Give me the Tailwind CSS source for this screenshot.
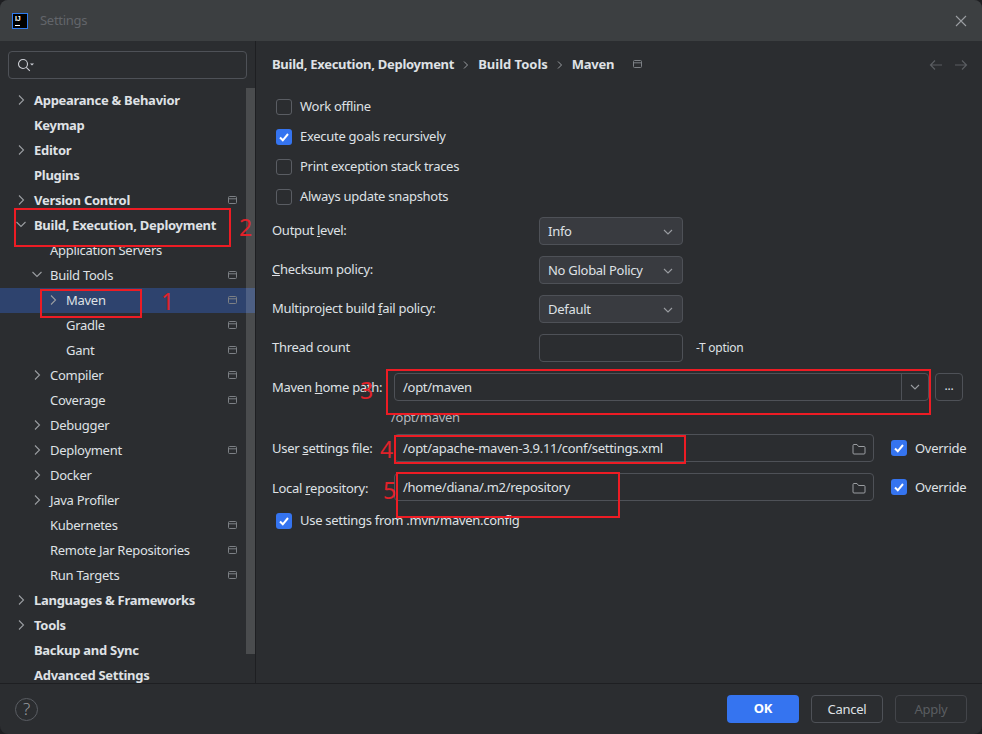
<!DOCTYPE html>
<html lang="en">
<head>
  <meta charset="UTF-8" />
  <title>Settings</title>
  <script src="https://cdn.jsdelivr.net/npm/@tailwindcss/browser@4"></script>
</head>
<body class="bg-[#1e1f22] font-['Noto_Sans',sans-serif] text-[13px] tracking-[-0.28px] text-[#dfe1e5]">
<div class="relative w-[982px] h-[734px] overflow-hidden rounded-[8px] bg-[#2b2d30] flex flex-col">

  <!-- Title bar -->
  <div class="h-[41px] shrink-0 bg-[#3c3f41] flex items-center pl-[12px] pr-[15px]">
    <div class="w-[16px] h-[16px] bg-black border border-[#2f7bf0] flex flex-col justify-between px-[2px] py-[1px]">
      <span class="text-white text-[7px] leading-[8px] font-bold font-['Liberation_Sans',sans-serif]">IJ</span>
      <span class="block w-[5px] h-[1px] bg-white mb-[1px]"></span>
    </div>
    <span class="ml-[12px] text-[#62656a]">Settings</span>
    <svg class="ml-auto" width="12" height="12" viewBox="0 0 12 12" fill="none" stroke="#9a9da1" stroke-width="1.1"><path d="M1 1l10 10M11 1L1 11"/></svg>
  </div>

  <div class="flex-1 flex min-h-0">
    <!-- Sidebar -->
    <div class="w-[256px] shrink-0 border-r border-[#1e1f22] relative">
      <div class="mt-[10px] mx-[8px] w-[239px] h-[28px] rounded-[4px] border border-[#4e5157] flex items-center pl-[8px]">
        <svg width="18" height="14" viewBox="0 0 18 14" fill="none" stroke="#ced0d6" stroke-width="1.1"><circle cx="6" cy="6" r="4.5"/><path d="M9.3 9.3l3.5 3.5"/><path d="M13 5.5h4l-2 2z" fill="#ced0d6" stroke="none"/></svg>
      </div>

      <div class="mt-[9px] text-[#dfe1e5]">
        <div class="h-[25px] flex items-center pl-[34px] font-bold relative"><svg class="absolute left-[17px] top-[6px]" width="8" height="12" viewBox="0 0 8 12" fill="none" stroke="#9a9da1" stroke-width="1.1"><path d="M2 1.5L6.5 6 2 10.5"/></svg>Appearance &amp; Behavior</div>
        <div class="h-[25px] flex items-center pl-[34px] font-bold">Keymap</div>
        <div class="h-[25px] flex items-center pl-[34px] font-bold relative"><svg class="absolute left-[17px] top-[6px]" width="8" height="12" viewBox="0 0 8 12" fill="none" stroke="#9a9da1" stroke-width="1.1"><path d="M2 1.5L6.5 6 2 10.5"/></svg>Editor</div>
        <div class="h-[25px] flex items-center pl-[34px] font-bold">Plugins</div>
        <div class="h-[25px] flex items-center pl-[34px] pr-[17px] font-bold relative"><svg class="absolute left-[17px] top-[6px]" width="8" height="12" viewBox="0 0 8 12" fill="none" stroke="#9a9da1" stroke-width="1.1"><path d="M2 1.5L6.5 6 2 10.5"/></svg>Version Control<svg class="ml-auto" width="10" height="10" viewBox="0 0 10 10" fill="none" stroke="#7d8085"><rect x=".5" y=".5" width="8" height="7" rx="1"/><path d="M.5 2.8h8"/></svg></div>
        <div class="h-[25px] flex items-center pl-[34px] font-bold relative"><svg class="absolute left-[15px] top-[7px]" width="12" height="8" viewBox="0 0 12 8" fill="none" stroke="#9a9da1" stroke-width="1.1"><path d="M1.5 2L6 6.5 10.5 2"/></svg>Build, Execution, Deployment</div>

        <div class="h-[25px] flex items-center pl-[50px]">Application Servers</div>
        <div class="h-[25px] flex items-center pl-[50px] pr-[17px] relative"><svg class="absolute left-[31px] top-[7px]" width="12" height="8" viewBox="0 0 12 8" fill="none" stroke="#9a9da1" stroke-width="1.1"><path d="M1.5 2L6 6.5 10.5 2"/></svg>Build Tools<svg class="ml-auto" width="10" height="10" viewBox="0 0 10 10" fill="none" stroke="#7d8085"><rect x=".5" y=".5" width="8" height="7" rx="1"/><path d="M.5 2.8h8"/></svg></div>
        <div class="h-[25px] flex items-center pl-[66px] pr-[17px] relative bg-[#2e436e]"><svg class="absolute left-[49px] top-[6px]" width="8" height="12" viewBox="0 0 8 12" fill="none" stroke="#9a9da1" stroke-width="1.1"><path d="M2 1.5L6.5 6 2 10.5"/></svg>Maven<svg class="ml-auto" width="10" height="10" viewBox="0 0 10 10" fill="none" stroke="#7d8085"><rect x=".5" y=".5" width="8" height="7" rx="1"/><path d="M.5 2.8h8"/></svg></div>
        <div class="h-[25px] flex items-center pl-[66px] pr-[17px]">Gradle<svg class="ml-auto" width="10" height="10" viewBox="0 0 10 10" fill="none" stroke="#7d8085"><rect x=".5" y=".5" width="8" height="7" rx="1"/><path d="M.5 2.8h8"/></svg></div>
        <div class="h-[25px] flex items-center pl-[66px] pr-[17px]">Gant<svg class="ml-auto" width="10" height="10" viewBox="0 0 10 10" fill="none" stroke="#7d8085"><rect x=".5" y=".5" width="8" height="7" rx="1"/><path d="M.5 2.8h8"/></svg></div>
        <div class="h-[25px] flex items-center pl-[50px] pr-[17px] relative"><svg class="absolute left-[33px] top-[6px]" width="8" height="12" viewBox="0 0 8 12" fill="none" stroke="#9a9da1" stroke-width="1.1"><path d="M2 1.5L6.5 6 2 10.5"/></svg>Compiler<svg class="ml-auto" width="10" height="10" viewBox="0 0 10 10" fill="none" stroke="#7d8085"><rect x=".5" y=".5" width="8" height="7" rx="1"/><path d="M.5 2.8h8"/></svg></div>
        <div class="h-[25px] flex items-center pl-[50px] pr-[17px]">Coverage<svg class="ml-auto" width="10" height="10" viewBox="0 0 10 10" fill="none" stroke="#7d8085"><rect x=".5" y=".5" width="8" height="7" rx="1"/><path d="M.5 2.8h8"/></svg></div>
        <div class="h-[25px] flex items-center pl-[50px] relative"><svg class="absolute left-[33px] top-[6px]" width="8" height="12" viewBox="0 0 8 12" fill="none" stroke="#9a9da1" stroke-width="1.1"><path d="M2 1.5L6.5 6 2 10.5"/></svg>Debugger</div>
        <div class="h-[25px] flex items-center pl-[50px] pr-[17px] relative"><svg class="absolute left-[33px] top-[6px]" width="8" height="12" viewBox="0 0 8 12" fill="none" stroke="#9a9da1" stroke-width="1.1"><path d="M2 1.5L6.5 6 2 10.5"/></svg>Deployment<svg class="ml-auto" width="10" height="10" viewBox="0 0 10 10" fill="none" stroke="#7d8085"><rect x=".5" y=".5" width="8" height="7" rx="1"/><path d="M.5 2.8h8"/></svg></div>
        <div class="h-[25px] flex items-center pl-[50px] relative"><svg class="absolute left-[33px] top-[6px]" width="8" height="12" viewBox="0 0 8 12" fill="none" stroke="#9a9da1" stroke-width="1.1"><path d="M2 1.5L6.5 6 2 10.5"/></svg>Docker</div>
        <div class="h-[25px] flex items-center pl-[50px] relative"><svg class="absolute left-[33px] top-[6px]" width="8" height="12" viewBox="0 0 8 12" fill="none" stroke="#9a9da1" stroke-width="1.1"><path d="M2 1.5L6.5 6 2 10.5"/></svg>Java Profiler</div>
        <div class="h-[25px] flex items-center pl-[50px] pr-[17px]">Kubernetes<svg class="ml-auto" width="10" height="10" viewBox="0 0 10 10" fill="none" stroke="#7d8085"><rect x=".5" y=".5" width="8" height="7" rx="1"/><path d="M.5 2.8h8"/></svg></div>
        <div class="h-[25px] flex items-center pl-[50px] pr-[17px]">Remote Jar Repositories<svg class="ml-auto" width="10" height="10" viewBox="0 0 10 10" fill="none" stroke="#7d8085"><rect x=".5" y=".5" width="8" height="7" rx="1"/><path d="M.5 2.8h8"/></svg></div>
        <div class="h-[25px] flex items-center pl-[50px] pr-[17px]">Run Targets<svg class="ml-auto" width="10" height="10" viewBox="0 0 10 10" fill="none" stroke="#7d8085"><rect x=".5" y=".5" width="8" height="7" rx="1"/><path d="M.5 2.8h8"/></svg></div>
        <div class="h-[25px] flex items-center pl-[34px] font-bold relative"><svg class="absolute left-[17px] top-[6px]" width="8" height="12" viewBox="0 0 8 12" fill="none" stroke="#9a9da1" stroke-width="1.1"><path d="M2 1.5L6.5 6 2 10.5"/></svg>Languages &amp; Frameworks</div>
        <div class="h-[25px] flex items-center pl-[34px] font-bold relative"><svg class="absolute left-[17px] top-[6px]" width="8" height="12" viewBox="0 0 8 12" fill="none" stroke="#9a9da1" stroke-width="1.1"><path d="M2 1.5L6.5 6 2 10.5"/></svg>Tools</div>
        <div class="h-[25px] flex items-center pl-[34px] font-bold">Backup and Sync</div>
        <div class="h-[25px] flex items-center pl-[34px] font-bold">Advanced Settings</div>
      </div>

      <!-- scrollbar thumb lies over the list -->
      <div class="absolute left-[246px] top-[47px] w-[9px] h-[566px] bg-white/15"></div>
    </div>

    <!-- Main panel -->
    <div class="flex-1 pl-[16px] pr-[15px] min-w-0">
      <div class="h-[47px] flex items-center font-bold">
        <span>Build, Execution, Deployment</span>
        <svg class="mx-[8px]" width="8" height="10" viewBox="0 0 8 10" fill="none" stroke="#9a9da1"><path d="M2 1.5L5.5 5 2 8.5"/></svg>
        <span class="tracking-[0px]">Build Tools</span>
        <svg class="mx-[8px]" width="8" height="10" viewBox="0 0 8 10" fill="none" stroke="#9a9da1"><path d="M2 1.5L5.5 5 2 8.5"/></svg>
        <span>Maven</span>
        <svg class="ml-[19px]" width="10" height="10" viewBox="0 0 10 10" fill="none" stroke="#7d8085"><rect x=".5" y=".5" width="8" height="7" rx="1"/><path d="M.5 2.8h8"/></svg>
        <div class="ml-auto flex gap-[11px] mr-[-1px]">
          <svg width="14" height="12" viewBox="0 0 14 12" fill="none" stroke="#5a5d61" stroke-width="1.2"><path d="M13 6H1.5M6 1.5L1.5 6 6 10.5"/></svg>
          <svg width="14" height="12" viewBox="0 0 14 12" fill="none" stroke="#5a5d61" stroke-width="1.2"><path d="M1 6h11.5M8 1.5L12.5 6 8 10.5"/></svg>
        </div>
      </div>

      <div class="mt-[11px] pl-[4px] flex flex-col gap-[14px]">
        <div class="h-[16px] flex items-center gap-[8px]"><span class="w-[16px] h-[16px] rounded-[3px] border border-[#5a5d63]"></span>Work offline</div>
        <div class="h-[16px] flex items-center gap-[8px]"><span class="w-[16px] h-[16px] rounded-[3px] bg-[#3574f0] flex items-center justify-center"><svg width="12" height="12" viewBox="0 0 12 12" fill="none" stroke="#fff" stroke-width="2"><path d="M2 6.5l2.8 2.8L10 3"/></svg></span>Execute goals recursively</div>
        <div class="h-[16px] flex items-center gap-[8px]"><span class="w-[16px] h-[16px] rounded-[3px] border border-[#5a5d63]"></span>Print exception stack traces</div>
        <div class="h-[16px] flex items-center gap-[8px]"><span class="w-[16px] h-[16px] rounded-[3px] border border-[#5a5d63]"></span>Always update snapshots</div>
      </div>

      <div class="mt-[12px] flex flex-col gap-[11px]">
        <div class="flex items-center h-[28px]"><span class="w-[267px]">Output <u>l</u>evel:</span><div class="w-[144px] h-[28px] rounded-[4px] bg-[#393b40] border border-[#4e5157] flex items-center pl-[8px] pr-[8px] pt-[2px]">Info<svg class="ml-auto" width="12" height="8" viewBox="0 0 12 8" fill="none" stroke="#9a9da1" stroke-width="1.1"><path d="M2 2l4 4 4-4"/></svg></div></div>
        <div class="flex items-center h-[28px]"><span class="w-[267px]"><u>C</u>hecksum policy:</span><div class="w-[144px] h-[28px] rounded-[4px] bg-[#393b40] border border-[#4e5157] flex items-center pl-[8px] pr-[8px] pt-[2px]">No Global Policy<svg class="ml-auto" width="12" height="8" viewBox="0 0 12 8" fill="none" stroke="#9a9da1" stroke-width="1.1"><path d="M2 2l4 4 4-4"/></svg></div></div>
        <div class="flex items-center h-[28px]"><span class="w-[267px]">Multiproject build <u>f</u>ail policy:</span><div class="w-[144px] h-[28px] rounded-[4px] bg-[#393b40] border border-[#4e5157] flex items-center pl-[8px] pr-[8px] pt-[2px]">Default<svg class="ml-auto" width="12" height="8" viewBox="0 0 12 8" fill="none" stroke="#9a9da1" stroke-width="1.1"><path d="M2 2l4 4 4-4"/></svg></div></div>
        <div class="flex items-center h-[28px]"><span class="w-[267px]">Thread count</span><div class="w-[144px] h-[28px] rounded-[4px] border border-[#4e5157]"></div><span class="ml-[13px] text-[12px]">-T option</span></div>

        <div class="flex items-center h-[28px]">
          <span class="w-[122px] pt-[2px]">Maven <u>h</u>ome path:</span>
          <div class="w-[535px] h-[28px] rounded-[4px] border border-[#4e5157] flex items-center pl-[8px]">
            <span class="pt-[2px]">/opt/maven</span>
            <div class="ml-auto w-[27px] h-full border-l border-[#4e5157] flex items-center justify-center"><svg width="12" height="8" viewBox="0 0 12 8" fill="none" stroke="#9a9da1" stroke-width="1.1"><path d="M2 2l4 4 4-4"/></svg></div>
          </div>
          <div class="ml-[6px] w-[28px] h-[28px] rounded-[4px] border border-[#4e5157] flex items-center justify-center text-[12px] leading-none pb-[2px]">...</div>
        </div>
      </div>

      <div class="h-[33px] pl-[119px] pt-[1px] flex items-center text-[#b4b6bb]">/opt/maven</div>

      <div class="flex flex-col gap-[11px]">
        <div class="flex items-center h-[28px]">
          <span class="w-[122px] pt-[2px]">User <u>s</u>ettings file:</span>
          <div class="w-[480px] h-[28px] rounded-[4px] border border-[#4e5157] flex items-center pl-[8px] pr-[7px] pt-[2px]">/opt/apache-maven-3.9.11/conf/settings.xml<svg class="ml-auto" width="14" height="12" viewBox="0 0 14 12" fill="none" stroke="#9a9da1"><path d="M1 2.5a1 1 0 0 1 1-1h3l1.5 2H12a1 1 0 0 1 1 1V10a1 1 0 0 1-1 1H2a1 1 0 0 1-1-1z"/></svg></div>
          <span class="ml-[17px] w-[16px] h-[16px] rounded-[3px] bg-[#3574f0] flex items-center justify-center"><svg width="12" height="12" viewBox="0 0 12 12" fill="none" stroke="#fff" stroke-width="2"><path d="M2 6.5l2.8 2.8L10 3"/></svg></span>
          <span class="ml-[8px] pt-[2px]">Override</span>
        </div>
        <div class="flex items-center h-[28px]">
          <span class="w-[122px] pt-[3px]">Local <u>r</u>epository:</span>
          <div class="w-[480px] h-[28px] rounded-[4px] border border-[#4e5157] flex items-center pl-[8px] pr-[7px] pt-[2px]">/home/diana/.m2/repository<svg class="ml-auto" width="14" height="12" viewBox="0 0 14 12" fill="none" stroke="#9a9da1"><path d="M1 2.5a1 1 0 0 1 1-1h3l1.5 2H12a1 1 0 0 1 1 1V10a1 1 0 0 1-1 1H2a1 1 0 0 1-1-1z"/></svg></div>
          <span class="ml-[17px] w-[16px] h-[16px] rounded-[3px] bg-[#3574f0] flex items-center justify-center"><svg width="12" height="12" viewBox="0 0 12 12" fill="none" stroke="#fff" stroke-width="2"><path d="M2 6.5l2.8 2.8L10 3"/></svg></span>
          <span class="ml-[8px] pt-[2px]">Override</span>
        </div>
      </div>

      <div class="mt-[12px] pl-[4px] h-[16px] flex items-center gap-[8px]"><span class="w-[16px] h-[16px] rounded-[3px] bg-[#3574f0] flex items-center justify-center"><svg width="12" height="12" viewBox="0 0 12 12" fill="none" stroke="#fff" stroke-width="2"><path d="M2 6.5l2.8 2.8L10 3"/></svg></span>Use settings from .mvn/maven.config</div>
    </div>
  </div>

  <!-- Footer -->
  <div class="h-[51px] shrink-0 border-t border-[#1e1f22] flex items-center pl-[15px] pr-[15px]">
    <div class="w-[23px] h-[23px] rounded-full border border-[#5a5d63] text-[#9a9da1] flex items-center justify-center text-[17px] font-light">?</div>
    <div class="ml-auto flex gap-[12px]">
      <div class="w-[72px] h-[28px] rounded-[4px] bg-[#3574f0] text-white font-bold flex items-center justify-center">OK</div>
      <div class="w-[72px] h-[28px] rounded-[4px] border border-[#4e5157] flex items-center justify-center pt-[2px]">Cancel</div>
      <div class="w-[72px] h-[28px] rounded-[4px] border border-[#43454a] text-[#5a5d61] flex items-center justify-center pt-[2px]">Apply</div>
    </div>
  </div>

  <!-- Red annotations drawn over the screenshot -->
  <div class="absolute left-[14px] top-[208px] w-[217px] h-[39px] border-2 border-[#ed1c24]"></div>
  <div class="absolute left-[40px] top-[289px] w-[102px] h-[29px] border-2 border-[#ed1c24]"></div>
  <div class="absolute left-[386px] top-[369px] w-[545px] h-[46px] border-2 border-[#ed1c24]"></div>
  <div class="absolute left-[394px] top-[435px] w-[292px] h-[29px] border-2 border-[#ed1c24]"></div>
  <div class="absolute left-[396px] top-[472px] w-[224px] h-[46px] border-2 border-[#ed1c24]"></div>
  <span class="absolute left-[239px] top-[212px] text-[23px] leading-[30px] text-[#e0222a]">2</span>
  <span class="absolute left-[161px] top-[286px] text-[23px] leading-[30px] text-[#e0222a]">1</span>
  <span class="absolute left-[360px] top-[375px] text-[23px] leading-[30px] text-[#e0222a]">3</span>
  <span class="absolute left-[380px] top-[434px] text-[23px] leading-[30px] text-[#e0222a]">4</span>
  <span class="absolute left-[383px] top-[475px] text-[23px] leading-[30px] text-[#e0222a]">5</span>
</div>
</body>
</html>
